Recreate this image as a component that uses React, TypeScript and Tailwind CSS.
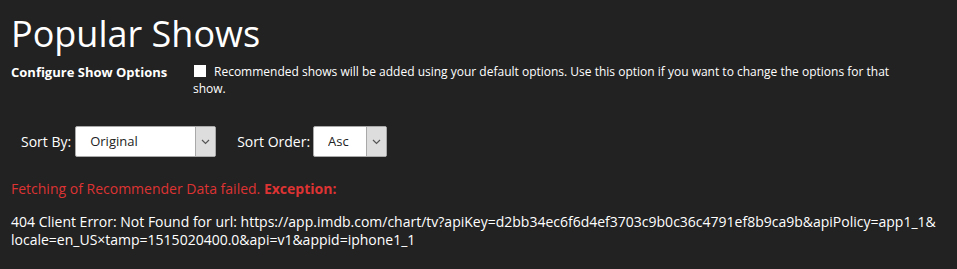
import React, { useState } from 'react';

const SelectBox: React.FC<{ value: string; width: string; options: string[] }> = ({ value, width, options }) => {
  const [current, setCurrent] = useState(value);
  return (
    <div className={`relative ${width} h-[31px] bg-white border border-[#a9a9a9] rounded-[2px] flex`}>
      <select
        value={current}
        onChange={(e) => setCurrent(e.target.value)}
        className="appearance-none flex-1 bg-transparent text-[#222] text-[13px] pl-[14px] outline-none"
      >
        {options.map((o) => (
          <option key={o}>{o}</option>
        ))}
      </select>
      <div className="pointer-events-none w-[20px] h-full bg-[#dddddd] border-l border-[#a9a9a9] flex items-center justify-center">
        <svg width="9" height="6" viewBox="0 0 9 6">
          <path d="M1 1 L4.5 4.5 L8 1" stroke="#555" strokeWidth="1.2" fill="none" />
        </svg>
      </div>
    </div>
  );
};

export default function App() {
  const [configure, setConfigure] = useState(false);

  return (
    <div className="min-h-screen w-full bg-[#222222] text-white font-['Open_Sans',sans-serif] px-[11px] pt-[12px]">
      {/* Title */}
      <h1 className="text-[36px] leading-[44px] font-normal">Popular Shows</h1>

      {/* Configure options */}
      <div className="flex mt-[7px]">
        <div className="w-[182px] shrink-0 text-[13px] font-bold leading-[18px]">Configure Show Options</div>
        <div className="text-[12px] leading-[17px] pr-[45px]">
          <input
            type="checkbox"
            checked={configure}
            onChange={(e) => setConfigure(e.target.checked)}
            className="appearance-none w-[12px] h-[12px] bg-white align-[-1px] mr-[8px] ml-[1px]"
          />
          Recommended shows will be added using your default options. Use this option if you want to change the options
          for that show.
        </div>
      </div>

      {/* Sort */}
      <div className="flex items-center mt-[29px] pl-[10px] text-[14px]">
        <span className="mr-[4px]">Sort By:</span>
        <SelectBox value="Original" width="w-[141px]" options={['Original', 'Title', 'Rating']} />
        <span className="ml-[21px] mr-[3px]">Sort Order:</span>
        <SelectBox value="Asc" width="w-[74px]" options={['Asc', 'Desc']} />
      </div>

      {/* Error */}
      <p className="mt-[22px] text-[14px] leading-[20px] text-[#dd3333]">
        Fetching of Recommender Data failed. <span className="font-bold">Exception:</span>
      </p>
      <p className="mt-[14px] text-[14px] leading-[18px] break-all">
        404 Client Error: Not Found for url: https://app.imdb.com/chart/tv?apiKey=d2bb34ec6f6d4ef3703c9b0c36c4791ef8b9ca9b&amp;apiPolicy=app1_1&amp;
        <br />
        locale=en_US×tamp=1515020400.0&amp;api=v1&amp;appid=iphone1_1
      </p>
    </div>
  );
}
